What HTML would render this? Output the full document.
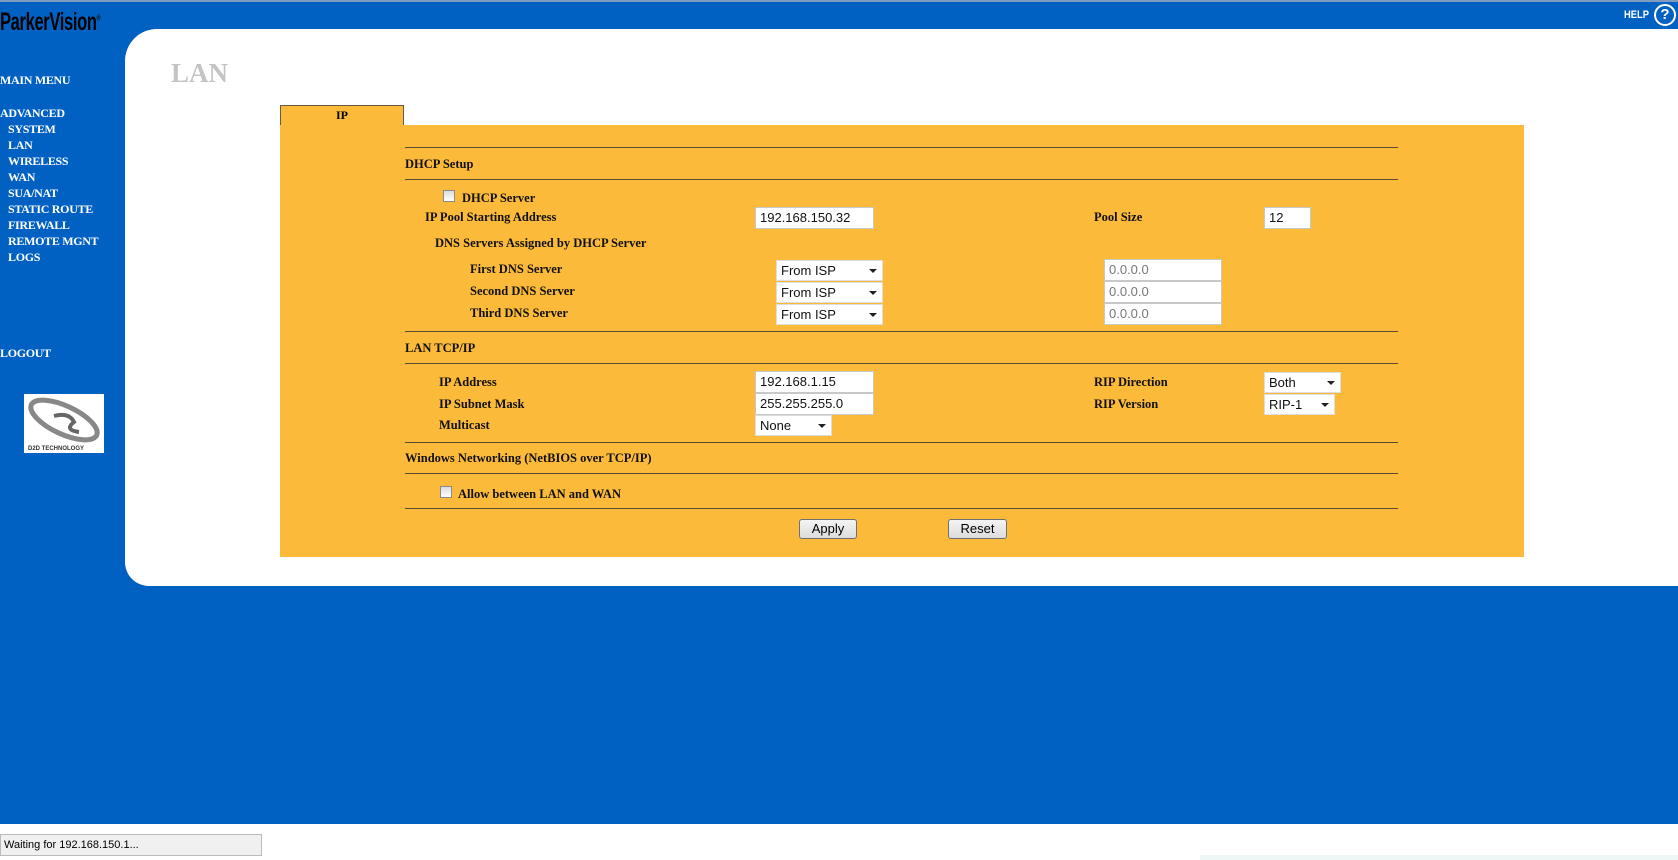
<!DOCTYPE html>
<html><head><meta charset="utf-8"><style>
*{margin:0;padding:0;box-sizing:border-box}
body{width:1678px;height:860px;overflow:hidden;background:#0161c2;position:relative;font-family:"Liberation Serif",serif}
.a{position:absolute;white-space:nowrap}
.nav{color:#fff;font-weight:bold;font-size:12px;left:0;letter-spacing:-0.3px}
.sub{left:8px}
.lbl{font-weight:bold;font-size:12.5px;color:#111}
.ln{position:absolute;left:405px;width:993px;height:1px;background:#5a4a30}
.inp{position:absolute;background:#fff;border:1px solid #c8c8c8;font:13px "Liberation Sans",sans-serif;color:#111;padding:2px 0 0 4px;height:22px}
.sel{position:absolute;background:#fff;border:1px solid #ddd;font:13px "Liberation Sans",sans-serif;color:#111;padding:2px 0 0 4px;height:21px}
.sel:after{content:"";position:absolute;right:5px;top:8px;border-left:4px solid transparent;border-right:4px solid transparent;border-top:4px solid #222}
.btn{position:absolute;height:20px;background:linear-gradient(#f4f4f4,#dcdcdc);border:1px solid #707070;border-radius:3px;font:13px "Liberation Sans",sans-serif;text-align:center;line-height:18px;color:#000}
.cb{position:absolute;width:12px;height:12px;border:1px solid #8a8a8a;background:linear-gradient(#ddd,#fff)}
</style></head><body>
<div class="a" style="left:0;top:0;width:1678px;height:2px;background:#7f9cc0"></div>
<div class="a" style="left:0;top:8px;color:#000;font:bold 25px 'Liberation Sans',sans-serif;transform:scaleX(.66);transform-origin:left;letter-spacing:-0.5px">ParkerVision<sup style="font-size:8px">®</sup></div>
<div class="a" style="left:1624px;top:9px;color:#fff;font:bold 11px 'Liberation Sans',sans-serif;transform:scaleX(.85);transform-origin:left">HELP</div>
<div class="a" style="left:1654px;top:4px;width:22px;height:22px;border:2px solid #fff;border-radius:50%;color:#fff;font:bold 15px 'Liberation Sans',sans-serif;text-align:center;line-height:18px">?</div>

<div class="a nav" style="top:73px">MAIN MENU</div>
<div class="a nav" style="top:106px">ADVANCED</div>
<div class="a nav sub" style="top:122px">SYSTEM</div>
<div class="a nav sub" style="top:138px">LAN</div>
<div class="a nav sub" style="top:154px">WIRELESS</div>
<div class="a nav sub" style="top:170px">WAN</div>
<div class="a nav sub" style="top:186px">SUA/NAT</div>
<div class="a nav sub" style="top:202px">STATIC ROUTE</div>
<div class="a nav sub" style="top:218px">FIREWALL</div>
<div class="a nav sub" style="top:234px">REMOTE MGNT</div>
<div class="a nav sub" style="top:250px">LOGS</div>
<div class="a nav" style="top:346px">LOGOUT</div>
<div class="a" style="left:24px;top:394px;width:80px;height:59px;background:#fff">
<svg width="80" height="59"><ellipse cx="40" cy="26" rx="36" ry="14" transform="rotate(25 40 26)" fill="none" stroke="#888" stroke-width="5"/><path d="M30 22 Q45 18 50 28 Q40 36 55 38" fill="none" stroke="#666" stroke-width="4"/><text x="4" y="56" font-family="Liberation Sans" font-size="6" font-weight="bold" fill="#333">D2D TECHNOLOGY</text></svg></div>

<div class="a" style="left:125px;top:29px;width:1560px;height:557px;background:#fff;border-radius:32px 0 0 24px"></div>
<div class="a" style="left:171px;top:58px;font-size:27px;font-weight:bold;color:#c4c4c4">LAN</div>

<div class="a" style="left:280px;top:105px;width:124px;height:21px;background:#fcba3a;border:1px solid #6a5a40;border-bottom:none;font-weight:bold;font-size:12px;text-align:center;line-height:19px">IP</div>
<div class="a" style="left:280px;top:125px;width:1244px;height:432px;background:#fcba3a"></div>

<div class="ln" style="top:147px"></div>
<div class="ln" style="top:179px"></div>
<div class="ln" style="top:331px"></div>
<div class="ln" style="top:363px"></div>
<div class="ln" style="top:442px"></div>
<div class="ln" style="top:473px"></div>
<div class="ln" style="top:508px"></div>

<div class="a lbl" style="left:405px;top:157px">DHCP Setup</div>
<div class="cb" style="left:443px;top:190px"></div>
<div class="a lbl" style="left:462px;top:191px">DHCP Server</div>
<div class="a lbl" style="left:425px;top:210px">IP Pool Starting Address</div>
<div class="inp" style="left:755px;top:207px;width:119px">192.168.150.32</div>
<div class="a lbl" style="left:1094px;top:210px">Pool Size</div>
<div class="inp" style="left:1264px;top:207px;width:47px">12</div>
<div class="a lbl" style="left:435px;top:236px">DNS Servers Assigned by DHCP Server</div>

<div class="a lbl" style="left:470px;top:262px">First DNS Server</div>
<div class="sel" style="left:776px;top:260px;width:107px">From ISP</div>
<div class="inp" style="left:1104px;top:259px;width:118px;color:#777">0.0.0.0</div>
<div class="a lbl" style="left:470px;top:284px">Second DNS Server</div>
<div class="sel" style="left:776px;top:282px;width:107px">From ISP</div>
<div class="inp" style="left:1104px;top:281px;width:118px;color:#777">0.0.0.0</div>
<div class="a lbl" style="left:470px;top:306px">Third DNS Server</div>
<div class="sel" style="left:776px;top:304px;width:107px">From ISP</div>
<div class="inp" style="left:1104px;top:303px;width:118px;color:#777">0.0.0.0</div>

<div class="a lbl" style="left:405px;top:341px">LAN TCP/IP</div>
<div class="a lbl" style="left:439px;top:375px">IP Address</div>
<div class="inp" style="left:755px;top:371px;width:119px">192.168.1.15</div>
<div class="a lbl" style="left:1094px;top:375px">RIP Direction</div>
<div class="sel" style="left:1264px;top:372px;width:77px">Both</div>
<div class="a lbl" style="left:439px;top:397px">IP Subnet Mask</div>
<div class="inp" style="left:755px;top:393px;width:119px">255.255.255.0</div>
<div class="a lbl" style="left:1094px;top:397px">RIP Version</div>
<div class="sel" style="left:1264px;top:394px;width:71px">RIP-1</div>
<div class="a lbl" style="left:439px;top:418px">Multicast</div>
<div class="sel" style="left:755px;top:415px;width:77px">None</div>

<div class="a lbl" style="left:405px;top:451px">Windows Networking (NetBIOS over TCP/IP)</div>
<div class="cb" style="left:440px;top:486px"></div>
<div class="a lbl" style="left:458px;top:487px">Allow between LAN and WAN</div>

<div class="btn" style="left:799px;top:519px;width:58px">Apply</div>
<div class="btn" style="left:948px;top:519px;width:59px">Reset</div>

<div class="a" style="left:0;top:824px;width:1678px;height:36px;background:#fff"></div>
<div class="a" style="left:0;top:834px;width:262px;height:22px;background:#f0f0f0;border:1px solid #bbb;font:11px 'Liberation Sans',sans-serif;padding:4px 3px;color:#000">Waiting for 192.168.150.1...</div>
<div class="a" style="left:1200px;top:855px;width:478px;height:5px;background:#eef6f6"></div>
</body></html>
